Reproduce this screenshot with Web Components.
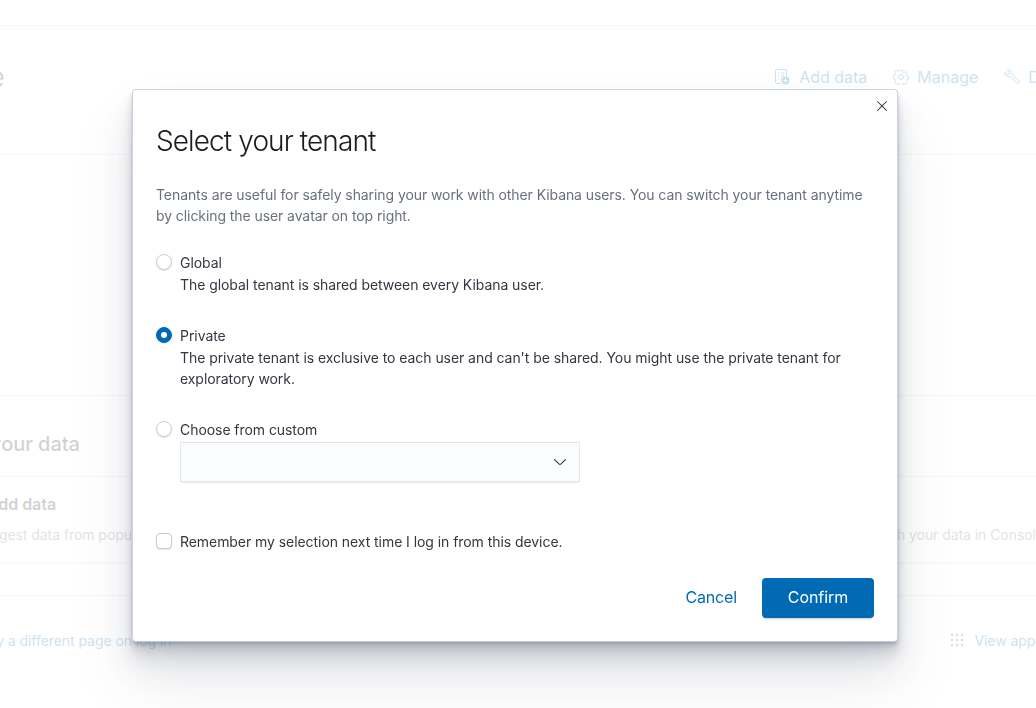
<!DOCTYPE html>
<html>
<head>
<meta charset="utf-8">
<style>
  html, body { margin: 0; height: 100%; overflow: hidden; background: #fff; }
  body { font-family: Inter, "Liberation Sans", sans-serif; font-size: 14px; color: #343741; letter-spacing: -.06px; }
</style>
</head>
<body>
<home-page></home-page>
<modal-overlay>
  <tenant-modal heading="Select your tenant">
    <p slot="intro">Tenants are useful for safely sharing your work with other Kibana users. You can switch your tenant anytime by clicking the user avatar on top right.</p>
    <tenant-radio label="Global">The global tenant is shared between every Kibana user.</tenant-radio>
    <tenant-radio label="Private" checked>The private tenant is exclusive to each user and can't be shared. You might use the private tenant for exploratory work.</tenant-radio>
    <tenant-radio label="Choose from custom"><tenant-select></tenant-select></tenant-radio>
    <tenant-checkbox slot="remember">Remember my selection next time I log in from this device.</tenant-checkbox>
    <button-empty slot="footer">Cancel</button-empty>
    <button-fill slot="footer">Confirm</button-fill>
  </tenant-modal>
</modal-overlay>

<script>
(function () {
    // attr: copies one attribute into a node of the shadow root
    function define(name, html, attr) {
        customElements.define(name, class extends HTMLElement {
            constructor() {
                super();
                this.attachShadow({ mode: 'open' }).innerHTML = html;
            }
            connectedCallback() {
                if (attr) {
                    this.shadowRoot.querySelector(attr.into).textContent = this.getAttribute(attr.name);
                }
            }
        });
    }

    const icons = {
        addData: `<svg width="16" height="16" viewBox="0 0 16 16" fill="none" stroke="currentColor"><path d="M6 14.500H1.500a1 1 0 01-1-1v-12a1 1 0 011-1h9a1 1 0 011 1V7"/><path d="M3 4h1M6 4h3.500M3 7h1M6 7h3M3 10h1M6 10h1"/><circle cx="10.500" cy="11.500" r="4" fill="currentColor" stroke="none"/><path d="M10.500 9.500v4M8.500 11.500h4" stroke="#fff"/></svg>`,
        gear: `<svg width="16" height="16" viewBox="0 0 16 16" fill="none" stroke="currentColor"><circle cx="8" cy="8" r="2.500"/><path d="M6.700.8h2.600l.4 2 1.300.6 1.800-1 1.800 1.900-1 1.700.5 1.300 2 .5v2.500l-2 .5-.5 1.300 1 1.700-1.800 1.900-1.800-1-1.300.6-.4 2H6.700l-.4-2-1.300-.6-1.800 1-1.800-1.900 1-1.700-.5-1.300-2-.5V6.300l2-.5.5-1.300-1-1.700 1.800-1.900 1.800 1 1.300-.6z" transform="translate(.4 .3) scale(.95)"/></svg>`,
        wrench: `<svg width="16" height="16" viewBox="0 0 16 16" fill="none" stroke="currentColor"><path d="M1 2.800L3.400 5l1.800-.4.400-1.700L3.300.8C5.300-.1 7.500.8 8 2.700c.2.800.1 1.500-.1 2.200l7 6.600c1.300 1.300-.6 3.400-2 2.100l-7-6.700C3 7.700.2 5.600 1 2.800z" transform="translate(0 .5)"/></svg>`,
        apps: `<svg width="16" height="16" viewBox="0 0 16 16" fill="currentColor"><path d="M2 2h2v2H2zM7 2h2v2H7zM12 2h2v2h-2zM2 7h2v2H2zM7 7h2v2H7zM12 7h2v2h-2zM2 12h2v2H2zM7 12h2v2H7zM12 12h2v2h-2z"/></svg>`,
        cross: `<svg width="16" height="16" viewBox="0 0 16 16" fill="#343741"><path d="M7.293 8L3.146 3.854a.5.5 0 11.708-.708L8 7.293l4.146-4.147a.5.5 0 01.708.708L8.707 8l4.147 4.146a.5.5 0 01-.708.708L8 8.707l-4.146 4.147a.5.5 0 01-.708-.708L7.293 8z"/></svg>`,
        chevron: `<svg width="16" height="16" viewBox="0 0 16 16" fill="#343741"><path d="M13.069 5.157L8.384 9.768a.546.546 0 01-.768 0L2.930 5.158a.552.552 0 00-.771 0 .53.53 0 000 .759l4.684 4.610c.641.631 1.672.63 2.312 0l4.684-4.610a.53.53 0 000-.760.552.552 0 00-.771 0z"/></svg>`
    };

    // the faded Kibana home page behind the modal
    define('home-link', `
      <style>
        :host { display: inline-flex; align-items: center; gap: 8px; color: #006bb4; font-size: 16px; letter-spacing: 0; white-space: nowrap; }
        :host([small]) { font-size: 14px; gap: 9px; letter-spacing: -.06px; }
        ::slotted(svg) { display: block; flex: none; }
      </style>
      <slot></slot>`);

    define('home-card', `
      <style>
        :host { display: block; }
        h3 { margin: 0 0 8px; font-size: 16px; line-height: 23px; font-weight: 600; color: #1a1c21; }
        div { font-size: 14px; line-height: 21px; color: #69707d; white-space: nowrap; }
      </style>
      <h3><slot name="title"></slot></h3>
      <div><slot></slot></div>`);

    define('home-page', `
      <style>
        :host { display: block; width: 1280px; margin-left: -80px; }
        .nav { height: 25px; margin-left: 80px; border-bottom: 1px solid #d3dae6; }
        .head { display: flex; justify-content: space-between; align-items: center; box-sizing: border-box; height: 129px; padding: 0 0 27px 7px; border-bottom: 1px solid #d3dae6; }
        h1 { margin: 0; font-size: 28px; line-height: 36px; font-weight: 300; color: #1a1c21; }
        .links { display: flex; gap: 26px; margin-right: 101px; }
        .empty { height: 240px; border-bottom: 1px solid #d3dae6; }
        h2 { margin: 0; height: 81px; box-sizing: border-box; padding: 36px 0 0 6px; font-size: 20px; line-height: 24px; font-weight: 500; color: #1a1c21; border-bottom: 1px solid #d3dae6; }
        .cards { display: flex; justify-content: space-between; height: 86px; box-sizing: border-box; padding: 16px 0 0 67px; border-bottom: 1px solid #d3dae6; box-shadow: 0 1px 2px rgba(65,78,101,.1); }
        .gap { height: 32px; border-bottom: 1px solid #d3dae6; }
        .foot { display: flex; justify-content: space-between; align-items: center; height: 88px; padding-left: 36px; }
        .foot home-link:last-child { margin-right: 102px; }
        .cards home-card:last-child { margin-right: 156px; }
      </style>
      <div class="nav"></div>
      <div class="head">
        <h1>Home</h1>
        <div class="links">
          <home-link>${icons.addData}Add data</home-link>
          <home-link>${icons.gear}Manage</home-link>
          <home-link>${icons.wrench}Dev tools</home-link>
        </div>
      </div>
      <div class="empty"></div>
      <h2>Ingest your data</h2>
      <div class="cards">
        <home-card><span slot="title">Add data</span>Ingest data from popular apps and services.</home-card>
        <home-card><span slot="title">Dev tools</span>Try things out with your data in Console</home-card>
      </div>
      <div class="gap"></div>
      <div class="foot">
        <home-link small>Display a different page on log in</home-link>
        <home-link small>${icons.apps}View app directory</home-link>
      </div>`);

    // the white veil sits over the page, so this one really is an overlay
    define('modal-overlay', `
      <style>
        :host { position: fixed; inset: 0; display: flex; align-items: flex-start; justify-content: center; padding: 89px 6px 0 0; box-sizing: border-box; background: rgba(255,255,255,.8); }
      </style>
      <slot></slot>`);

    define('tenant-modal', `
      <style>
        :host { display: block; position: relative; width: 766px; height: 553px; box-sizing: border-box; background: #fff; border: 1px solid #ccd3df; border-bottom-color: #c0c7d3; border-radius: 4px; padding: 0 23px;
          box-shadow: 0 40px 64px 0 rgba(65,78,101,.1), 0 24px 32px 0 rgba(65,78,101,.1), 0 16px 16px 0 rgba(65,78,101,.12), 0 8px 8px 0 rgba(65,78,101,.12), 0 4px 4px 0 rgba(65,78,101,.12), 0 2px 2px 0 rgba(65,78,101,.14); }
        .close { position: absolute; top: 8px; right: 7px; width: 16px; height: 16px; line-height: 0; }
        h1 { margin: 0; padding-top: 33px; font-size: 28px; line-height: 36px; font-weight: 300; color: #1a1c21; letter-spacing: -.9px; }
        .intro { padding-top: 25px; }
        ::slotted(p) { margin: 0; font-size: 14px; line-height: 21px; color: #69707d; letter-spacing: -.08px; }
        .options { display: flex; flex-direction: column; gap: 30px; padding-top: 26px; }
        .remember { padding-top: 49px; }
        .footer { display: flex; justify-content: flex-end; align-items: center; gap: 13px; padding-top: 26px; }
      </style>
      <div class="close">${icons.cross}</div>
      <h1></h1>
      <div class="intro"><slot name="intro"></slot></div>
      <div class="options"><slot></slot></div>
      <div class="remember"><slot name="remember"></slot></div>
      <div class="footer"><slot name="footer"></slot></div>`, { name: 'heading', into: 'h1' });

    define('tenant-radio', `
      <style>
        :host { display: grid; grid-template-columns: 16px 1fr; column-gap: 8px; font-size: 14px; line-height: 21px; color: #343741; }
        .dot { width: 16px; height: 16px; box-sizing: border-box; margin-top: 2px; border-radius: 50%; background: #fff; border: 1px solid #c9cbcd; box-shadow: 0 1px 1px rgba(152,162,179,.25); position: relative; }
        :host([checked]) .dot { background: #006bb4; border-color: #006bb4; }
        :host([checked]) .dot::after { content: ''; position: absolute; left: 4px; top: 4px; width: 6px; height: 6px; border-radius: 50%; background: #fff; }
        .label { line-height: 21px; margin-bottom: 1px; }
      </style>
      <div class="dot"></div>
      <div class="label"></div>
      <div></div>
      <div class="text"><slot></slot></div>`, { name: 'label', into: '.label' });

    define('tenant-select', `
      <style>
        :host { display: flex; align-items: center; justify-content: flex-end; width: 400px; height: 40px; box-sizing: border-box; margin-top: 1px; padding-right: 11px; background: #fbfcfd; border: 1px solid #e0e5ee; box-shadow: 0 1px 1px -1px rgba(152,162,179,.2), 0 3px 2px -2px rgba(152,162,179,.2); }
        svg { display: block; }
      </style>
      ${icons.chevron}`);

    define('tenant-checkbox', `
      <style>
        :host { display: flex; gap: 8px; align-items: flex-start; font-size: 14px; line-height: 21px; color: #343741; }
        .box { flex: none; width: 16px; height: 16px; box-sizing: border-box; margin-top: 2px; border-radius: 4px; background: #fff; border: 1px solid #c9cbcd; box-shadow: 0 1px 1px rgba(152,162,179,.25); }
      </style>
      <div class="box"></div>
      <slot></slot>`);

    define('button-empty', `
      <style>
        :host { display: inline-flex; align-items: center; justify-content: center; height: 40px; box-sizing: border-box; padding: 0 12px 2px; font-size: 16px; letter-spacing: -.15px; color: #006bb4; }
      </style>
      <slot></slot>`);

    define('button-fill', `
      <style>
        :host { display: inline-flex; align-items: center; justify-content: center; width: 112px; height: 40px; box-sizing: border-box; padding-bottom: 2px; border-radius: 4px; font-size: 16px; color: #fff; background: #006bb4; box-shadow: 0 2px 2px -1px rgba(54,97,126,.3); }
      </style>
      <slot></slot>`);
}());
</script>
</body>
</html>
